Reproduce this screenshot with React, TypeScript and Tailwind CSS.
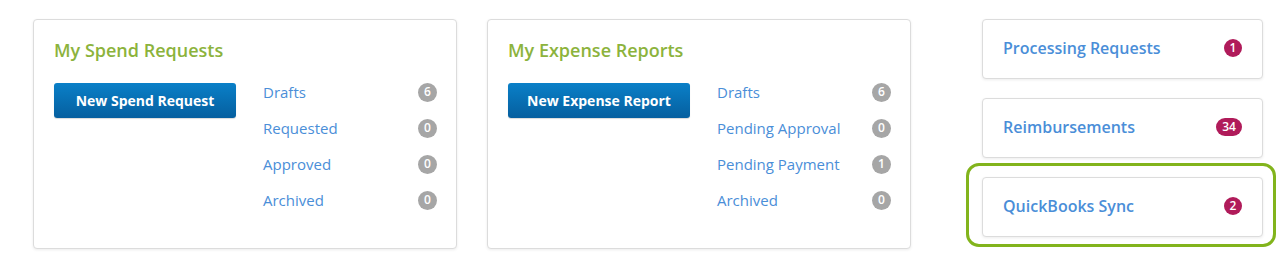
import React from "react";

type Row = { label: string; count: number };

function Card({ title, button, rows }: { title: string; button: string; rows: Row[] }) {
  return (
    <div className="w-[424px] h-[230px] bg-white border border-[#dcdcdc] rounded-[4px] shadow-[0_1px_3px_rgba(0,0,0,0.08)] pl-[20px] pr-[19px] pt-[17px]">
      <div className="text-[18px] leading-[26px] font-semibold text-[#8cb33c]">{title}</div>
      <div className="flex mt-[20px]">
        <button className="w-[182px] h-[35px] rounded-[3px] bg-gradient-to-b from-[#0a80c8] to-[#065f9f] text-white text-[14px] font-bold shadow-[0_1px_1px_rgba(0,0,0,0.15)]">
          {button}
        </button>
        <div className="flex-1 ml-[27px] flex flex-col gap-[18px]">
          {rows.map((r) => (
            <div key={r.label} className="flex items-center justify-between h-[18px]">
              <span className="text-[15px] text-[#4a8ed8]">{r.label}</span>
              <span className="w-[19px] h-[19px] rounded-full bg-[#a6a6a6] text-white text-[12px] font-semibold flex items-center justify-center">
                {r.count}
              </span>
            </div>
          ))}
        </div>
      </div>
    </div>
  );
}

function SideCard({ label, count, wide }: { label: string; count: number; wide?: boolean }) {
  return (
    <div className="w-[281px] h-[60px] bg-white border border-[#dcdcdc] rounded-[4px] shadow-[0_1px_3px_rgba(0,0,0,0.08)] pl-[20px] pr-[20px] pb-[3px] flex items-center justify-between">
      <span className="text-[16px] font-semibold text-[#4a8ed8]">{label}</span>
      <span
        className={
          (wide ? "w-[26px] px-[4px]" : "w-[18px]") +
          " h-[18px] rounded-full bg-[#b01b5a] text-white text-[12px] font-semibold flex items-center justify-center"
        }
      >
        {count}
      </span>
    </div>
  );
}

export default function App() {
  return (
    <div className="w-[1284px] h-[254px] bg-white overflow-hidden" style={{ fontFamily: '"Open Sans", sans-serif' }}>
      <div className="flex pl-[33px] pt-[19px]">
        <Card
          title="My Spend Requests"
          button="New Spend Request"
          rows={[
            { label: "Drafts", count: 6 },
            { label: "Requested", count: 0 },
            { label: "Approved", count: 0 },
            { label: "Archived", count: 0 },
          ]}
        />
        <div className="ml-[30px]">
          <Card
            title="My Expense Reports"
            button="New Expense Report"
            rows={[
              { label: "Drafts", count: 6 },
              { label: "Pending Approval", count: 0 },
              { label: "Pending Payment", count: 1 },
              { label: "Archived", count: 0 },
            ]}
          />
        </div>
        <div className="ml-[71px] flex flex-col gap-[19px]">
          <SideCard label="Processing Requests" count={1} />
          <SideCard label="Reimbursements" count={34} wide />
          <div className="relative">
            <div className="absolute left-[-16px] top-[-14px] right-[-13px] bottom-[-10px] border-[3px] border-[#82b41c] rounded-[13px]" />
            <div className="relative">
              <SideCard label="QuickBooks Sync" count={2} />
            </div>
          </div>
        </div>
      </div>
    </div>
  );
}
